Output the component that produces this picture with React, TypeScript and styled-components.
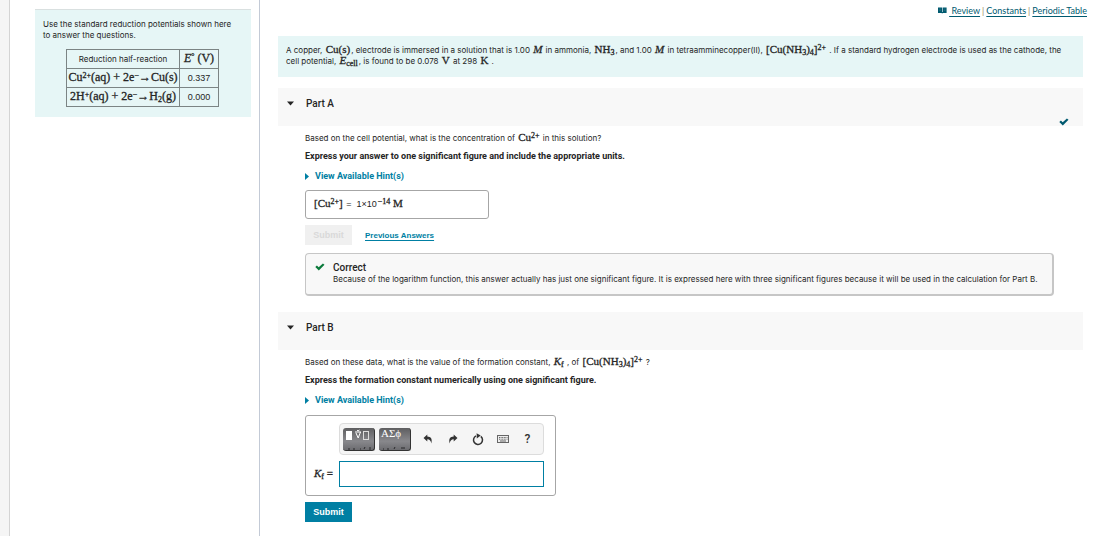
import React from "react";
import styled, { createGlobalStyle } from "styled-components";

const teal = "#007fa3";
const body = 'Inter, "Liberation Sans", Arial, sans-serif';
const sans = 'Roboto, "Liberation Sans", Arial, sans-serif';
const arial = '"Liberation Sans", Arial, sans-serif';
const serif = '"Liberation Serif", "Times New Roman", serif';

const GlobalStyle = createGlobalStyle`
  * { box-sizing: border-box; }
  body { margin: 0; background: #fff; color: #252525; font: 8px/11px ${body}; }
  p, h2 { margin: 0; }
  button, input { font-family: inherit; }
`;

const Page = styled.div`
  display: flex;
  min-height: 100vh;
`;
const Gutter = styled.div`
  flex: 0 0 10px;
  background: #f5f5f5;
  border-right: 1px solid #d4d4d4;
`;
const Sidebar = styled.aside`
  flex: 0 0 250px;
  padding: 9px 8px 0 25px;
  border-right: 1px solid #c3cad6;
`;
const DataPanel = styled.section`
  background: #e6f6f6;
  border-top: 1px solid #d9e0e0;
  padding: 9px 12px 10px 8px;
`;
const Tex = styled.span`
  margin: 0 1px;
  font-family: ${serif};
  font-size: 11px;
  line-height: 1px;
  white-space: nowrap;
  -webkit-text-stroke: 0.3px #252525;
  sup, sub { font-size: 8px; line-height: 1px; }
  sup { vertical-align: 3px; }
  sub { vertical-align: -2px; }
`;
const PotentialTable = styled.table`
  border-collapse: collapse;
  margin: 8px 0 0 23px;
  width: 153px;
  th, td {
    border: 1px solid #7b8484;
    height: 19px;
    padding: 0;
    font-weight: normal;
    text-align: center;
    white-space: nowrap;
  }
  th:last-child { width: 39px; }
  td:last-child { font-family: ${arial}; font-size: 9px; }
  ${Tex} { margin: 0; font-size: 12px; }
`;
const Main = styled.main`
  flex: 1;
  min-width: 0;
  padding: 4px 13px 0 18px;
`;
const TopLinks = styled.nav`
  display: flex;
  justify-content: flex-end;
  align-items: center;
  gap: 2px;
  margin-right: -4px;
  height: 12px;
  color: #9a8a5a;
  font-family: Lato, ${arial};
  font-size: 9px;
`;
const TopLink = styled.a`
  color: #005a70;
  text-underline-offset: 2px;
`;
const Intro = styled.section`
  background: #e6f6f6;
  margin-top: 20px;
  padding: 9px 8px 10px;
`;
const PartHeader = styled.header<{ $gap: number }>`
  display: flex;
  align-items: center;
  margin-top: ${(p) => p.$gap}px;
  height: 38px;
  padding: 0 14px 0 9px;
  background: #f8f8f8;
`;
const Toggle = styled.button`
  display: flex;
  align-items: center;
  gap: 12px;
  height: 20px;
  margin-bottom: 8px;
  padding: 0;
  border: 0;
  background: none;
  color: #252525;
  font-family: ${sans};
  font-size: 10px;
  font-weight: 500;
`;
const DoneMark = styled.span`
  display: flex;
  align-self: flex-end;
  margin-left: auto;
`;
const PartBody = styled.section`
  padding: 6px 29px 0 27px;
`;
const Question = styled.p`
  line-height: 12px;
`;
const Instruction = styled.p`
  margin-top: 6px;
  font-family: ${sans};
  font-size: 9px;
  font-weight: bold;
  line-height: 12px;
`;
const Hint = styled.button`
  display: flex;
  align-items: center;
  gap: 6px;
  margin: 8px 0 0;
  padding: 0;
  border: 0;
  background: none;
  color: ${teal};
  font-family: ${sans};
  font-size: 9px;
  font-weight: bold;
  line-height: 12px;
`;
const AnswerBox = styled.div`
  width: 184px;
  height: 29px;
  margin-top: 8px;
  padding: 0 7px;
  border: 1px solid #a6a6a6;
  border-radius: 3px;
  font-family: ${arial};
  font-size: 9px;
  line-height: 27px;
  white-space: pre;
`;
const Actions = styled.div`
  display: flex;
  align-items: center;
  gap: 13px;
  margin-top: 6px;
`;
const Submit = styled.button`
  width: 47px;
  height: 20px;
  padding: 0;
  border: 0;
  background: ${teal};
  color: #fff;
  font-family: ${arial};
  font-size: 9px;
  font-weight: bold;
  &:disabled { background: #f0f0f0; color: #d9d9d9; }
`;
const PreviousLink = styled.a`
  color: ${teal};
  font-family: ${arial};
  font-size: 8px;
  font-weight: bold;
  text-underline-offset: 2px;
`;
const Feedback = styled.div`
  display: flex;
  gap: 8px;
  margin-top: 8px;
  padding: 8px 8px 9px 9px;
  background: #f8f8f8;
  border: solid #c6c6c6;
  border-width: 1px 2px 2px 1px;
  border-radius: 4px;
  svg { flex: none; margin-top: 1px; }
`;
const FeedbackTitle = styled.h2`
  font-family: ${sans};
  font-size: 10px;
  font-weight: 500;
  line-height: 12px;
`;
const Editor = styled.div`
  display: grid;
  grid-template-columns: 26px 205px;
  align-items: center;
  row-gap: 6px;
  width: 251px;
  margin: 9px 0 6px;
  padding: 7px 8px 8px 7px;
  border: 1px solid #a6a6a6;
  border-radius: 3px;
`;
const Toolbar = styled.div`
  grid-column: 2;
  display: flex;
  align-items: center;
  height: 32px;
  padding: 0 3px;
  background: #f5f5f5;
  border: 1px solid #dcdcdc;
  border-radius: 4px;
`;
const PaletteButton = styled.button`
  flex: none;
  width: 32px;
  height: 23px;
  margin-right: 4px;
  padding: 0;
  overflow: hidden;
  border: 1px solid #333;
  border-width: 0 1px 1px 0;
  border-radius: 3px;
  background: linear-gradient(#5e5e60, #88888c 60%, #6c6c70);
  color: #fff;
  svg { display: block; }
`;
const ToolButton = styled.button`
  flex: none;
  display: flex;
  align-items: center;
  justify-content: center;
  width: 25px;
  height: 24px;
  padding: 0;
  border: 0;
  background: none;
  color: #333;
  font-family: ${sans};
  font-size: 12px;
  font-weight: 500;
`;
const AnswerInput = styled.input`
  width: 100%;
  height: 26px;
  padding: 0 6px;
  border: 1px solid ${teal};
  background: #fff;
  font-size: 10px;
  outline: none;
`;

const Ammine = () => (
  <Tex>[Cu(NH<sub>3</sub>)<sub>4</sub>]<sup>2+</sup></Tex>
);
const Check = ({ color }: { color: string }) => (
  <svg width="10" height="8" viewBox="0 0 10 8" aria-hidden="true">
    <path d="M0.3 4.1 L1.9 2.6 L3.7 4.2 L7.9 0.4 L9.5 1.8 L3.8 7.5 Z" fill={color} />
  </svg>
);
const Down = () => (
  <svg width="7" height="5" viewBox="0 0 7 5" aria-hidden="true">
    <path d="M0 0.5H7L3.5 4.5Z" fill="#252525" />
  </svg>
);
const Right = () => (
  <svg width="4" height="7" viewBox="0 0 4 7" aria-hidden="true">
    <path d="M0 0L4 3.5L0 7Z" fill={teal} />
  </svg>
);
const Undo = () => (
  <svg width="10" height="10" viewBox="0 0 10 10" aria-hidden="true">
    <path d="M0.5 3.9L4.3 0.5V2.6C8 2.7 9.5 5 8.3 9.5C8 6.8 6.7 5.4 4.3 5.3V7.4Z" fill="#333" />
  </svg>
);
const Redo = () => (
  <svg width="10" height="10" viewBox="0 0 10 10" aria-hidden="true">
    <path d="M9.5 3.9L5.7 0.5V2.6C2 2.7 0.5 5 1.7 9.5C2 6.8 3.3 5.4 5.7 5.3V7.4Z" fill="#333" />
  </svg>
);
const Reset = () => (
  <svg width="12" height="13" viewBox="0 0 12 13" aria-hidden="true">
    <path d="M4 2.9A4.5 4.5 0 1 0 8.8 3.4" fill="none" stroke="#333" strokeWidth="1.5" />
    <path d="M4.6 0.3L8.7 2.6L4.8 5.5Z" fill="#333" />
  </svg>
);
const Keyboard = () => (
  <svg width="12" height="8" viewBox="0 0 12 8" aria-hidden="true">
    <rect x="0.5" y="0.5" width="11" height="7" fill="#eee" stroke="#666" />
    <path d="M2 2.5H10.5M2 4.2H10.5" stroke="#666" strokeDasharray="1 0.6" />
    <path d="M3 6H9" stroke="#666" />
  </svg>
);
const Book = () => (
  <svg width="9" height="7" viewBox="0 0 9 7" aria-hidden="true">
    <path d="M0 0.5H4V6H0ZM4.6 0.5H8.6V6H4.6ZM3.6 5H5V6.3H3.6Z" fill="#005a70" />
    <path d="M1.2 2H3M1.2 3.5H3M5.8 2H7.5M5.8 3.5H7.5" stroke="#47808e" strokeWidth="0.5" />
  </svg>
);
const Template = () => (
  <svg width="31" height="22" viewBox="0 0 31 22" aria-hidden="true">
    <rect x="3" y="3" width="6" height="9" fill="#fff" />
    <path d="M12 4H18M13 5L15.2 10L17.5 4M14 2.2L15 3L16.5 2" fill="none" stroke="#fff" />
    <rect x="20.5" y="3.5" width="5" height="8" fill="none" stroke="#ddd" />
    <path d="M5 21H7M10 21H12M17 21H18M21 21L22 19M27 19V22" stroke="#29292b" />
  </svg>
);
const Greek = () => (
  <svg width="31" height="22" viewBox="0 0 31 22" aria-hidden="true">
    <text x="2" y="9" fill="#fff" fontFamily={serif} fontSize="11">ΑΣϕ</text>
    <path d="M4 21H5M8 21H10M15 21L16 19M22 20H26" stroke="#29292b" />
  </svg>
);

function Part({ name, gap, done, children }: { name: string; gap: number; done?: boolean; children: React.ReactNode }) {
  return (
    <>
      <PartHeader $gap={gap}>
        <Toggle aria-expanded="true"><Down />{name}</Toggle>
        {done && <DoneMark><Check color="#005a70" /></DoneMark>}
      </PartHeader>
      <PartBody>{children}</PartBody>
    </>
  );
}

export default function App() {
  return (
    <Page>
      <GlobalStyle />
      <Gutter />
      <Sidebar>
        <DataPanel>
          <p>Use the standard reduction potentials shown here to answer the questions.</p>
          <PotentialTable>
            <thead>
              <tr><th>Reduction half-reaction</th><th><Tex><i>E</i><sup>°</sup> (V)</Tex></th></tr>
            </thead>
            <tbody>
              <tr>
                <td><Tex>Cu<sup>2+</sup>(aq) + 2e<sup>−</sup>→Cu(s)</Tex></td>
                <td>0.337</td>
              </tr>
              <tr>
                <td><Tex>2H<sup>+</sup>(aq) + 2e<sup>−</sup>→H<sub>2</sub>(g)</Tex></td>
                <td>0.000</td>
              </tr>
            </tbody>
          </PotentialTable>
        </DataPanel>
      </Sidebar>
      <Main>
        <TopLinks>
          <Book />
          <TopLink href="#review">&nbsp;Review</TopLink>|
          <TopLink href="#constants">Constants</TopLink>|
          <TopLink href="#periodic-table">Periodic Table</TopLink>
        </TopLinks>
        <Intro>
          <p>
            A copper, <Tex>Cu(s)</Tex>, electrode is immersed in a solution that is 1.00 <Tex><i>M</i></Tex> in
            ammonia, <Tex>NH<sub>3</sub></Tex>, and 1.00 <Tex><i>M</i></Tex> in tetraamminecopper(II), <Ammine /> . If
            a standard hydrogen electrode is used as the cathode, the cell
            potential, <Tex><i>E</i><sub>cell</sub></Tex>, is found to be 0.078 <Tex>V</Tex> at 298 <Tex>K</Tex> .
          </p>
        </Intro>
        <Part name="Part A" gap={11} done>
          <Question>
            Based on the cell potential, what is the concentration of <Tex>Cu<sup>2+</sup></Tex> in this solution?
          </Question>
          <Instruction>Express your answer to one significant figure and include the appropriate units.</Instruction>
          <Hint><Right />View Available Hint(s)</Hint>
          <AnswerBox>
            <Tex>[Cu<sup>2+</sup>]</Tex> =  1×10<Tex><sup>−14</sup> M</Tex>
          </AnswerBox>
          <Actions>
            <Submit disabled>Submit</Submit>
            <PreviousLink href="#previous-answers">Previous Answers</PreviousLink>
          </Actions>
          <Feedback>
            <Check color="#0b7a3b" />
            <div>
              <FeedbackTitle>Correct</FeedbackTitle>
              <p>
                Because of the logarithm function, this answer actually has just one significant figure. It is
                expressed here with three significant figures because it will be used in the calculation for Part B.
              </p>
            </div>
          </Feedback>
        </Part>
        <Part name="Part B" gap={16}>
          <Question>
            Based on these data, what is the value of the formation
            constant, <Tex><i>K</i><sub>f</sub></Tex> , of <Ammine /> ?
          </Question>
          <Instruction>Express the formation constant numerically using one significant figure.</Instruction>
          <Hint><Right />View Available Hint(s)</Hint>
          <Editor>
            <Toolbar>
              <PaletteButton aria-label="Templates"><Template /></PaletteButton>
              <PaletteButton aria-label="Symbols"><Greek /></PaletteButton>
              <ToolButton aria-label="Undo"><Undo /></ToolButton>
              <ToolButton aria-label="Redo"><Redo /></ToolButton>
              <ToolButton aria-label="Reset"><Reset /></ToolButton>
              <ToolButton aria-label="Keyboard shortcuts"><Keyboard /></ToolButton>
              <ToolButton aria-label="Help">?</ToolButton>
            </Toolbar>
            <label htmlFor="kf"><Tex><i>K</i><sub>f</sub> =</Tex></label>
            <AnswerInput id="kf" type="text" />
          </Editor>
          <Submit>Submit</Submit>
        </Part>
      </Main>
    </Page>
  );
}
